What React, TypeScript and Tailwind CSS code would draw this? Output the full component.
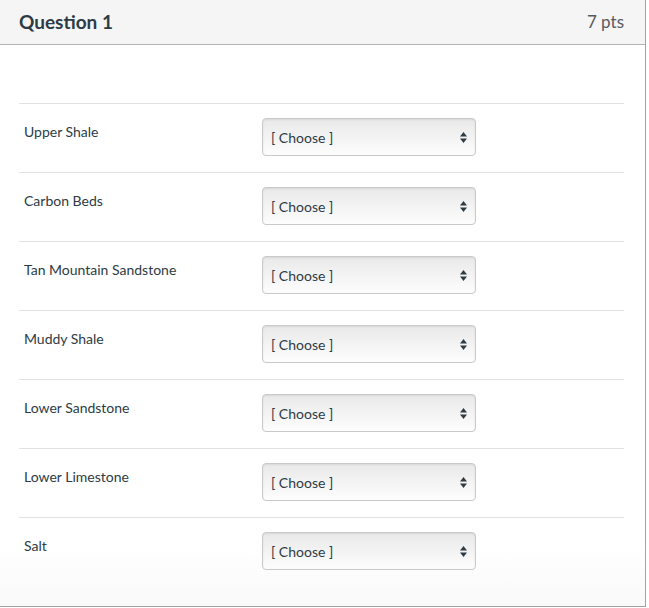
const rows = [
  "Upper Shale",
  "Carbon Beds",
  "Tan Mountain Sandstone",
  "Muddy Shale",
  "Lower Sandstone",
  "Lower Limestone",
  "Salt",
];

function FakeSelect() {
  return (
    <div className="relative w-[214px] h-[38px] rounded-[4px] border border-[#c9c9c9] bg-gradient-to-b from-[#e9e9e9] to-[#fdfdfd] shadow-[inset_0_1px_2px_rgba(0,0,0,0.08)] flex items-center pl-[8px] text-[14px] text-[#2d3b45]">
      [ Choose ]
      <svg className="absolute right-[8px] top-[13px]" width="7" height="11" viewBox="0 0 7 11">
        <path d="M3.5 0 L7 4.5 L0 4.5 Z" fill="#2d3b45" />
        <path d="M3.5 11 L7 6.5 L0 6.5 Z" fill="#2d3b45" />
      </svg>
    </div>
  );
}

export default function App() {
  return (
    <div className="w-[649px] h-[608px] bg-white" style={{ fontFamily: "Lato, 'Open Sans', sans-serif" }}>
      <div className="w-[646px] h-[607px] border-r border-b border-[#a3a3a3] flex flex-col bg-gradient-to-b from-white from-90% to-[#f9f9f9]">
        <div className="h-[45px] shrink-0 bg-[#f5f5f5] border-b border-[#b3b3b3] flex items-center justify-between pl-[19px] pr-[21px]">
          <span className="text-[19px] font-bold text-[#2d3b45]">Question 1</span>
          <span className="text-[17px] font-normal text-[#59595f]">7 pts</span>
        </div>
        <div className="pt-[58px] pl-[19px] pr-[21px]">
          {rows.map((r) => (
            <div key={r} className="h-[69px] border-t border-[#e2e2e2] flex items-start">
              <div className="w-[243px] pl-[5px] pt-[17px] text-[14px] font-normal text-[#2d3b45]">{r}</div>
              <div className="pt-[14px]">
                <FakeSelect />
              </div>
            </div>
          ))}
        </div>
      </div>
    </div>
  );
}
